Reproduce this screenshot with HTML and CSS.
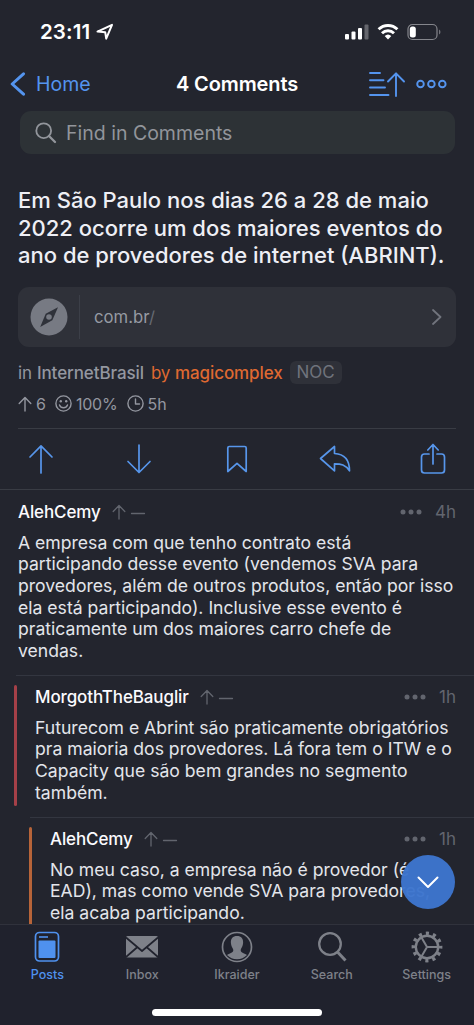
FILE: index.html
```html
<!DOCTYPE html>
<html lang="pt-BR">
<head>
<meta charset="utf-8">
<meta name="viewport" content="width=device-width, initial-scale=1">
<title>4 Comments</title>
<link rel="stylesheet" href="styles.css">
</head>
<body>
<svg class="defs" width="0" height="0">
  <symbol id="vote" viewBox="0 0 34 16"><path d="M7 15V2M1.200 7.500 7 1.500l5.800 6M19.500 9.500h13" /></symbol>
  <symbol id="dots" viewBox="0 0 22 6"><g fill="currentColor" stroke="none"><circle cx="3" cy="3" r="2.500"/><circle cx="11" cy="3" r="2.500"/><circle cx="19" cy="3" r="2.500"/></g></symbol>
</svg>
<div class="phone">
  <header class="status">
    <span class="time">23:11</span>
    <svg class="loc" width="18" height="18" viewBox="0 0 18 18"><path d="M1.500 8.600 16 1.800 10.200 15.600 9.200 9.200Z"/></svg>
    <svg class="signals" width="98" height="18" viewBox="0 0 98 18">
      <g fill="#fff"><rect x="1" y="11" width="4" height="5.500" rx="1"/><rect x="7.500" y="8.500" width="4" height="8" rx="1"/><rect x="14" y="5" width="4" height="11.500" rx="1"/><rect x="20.500" y="1.500" width="4" height="15" rx="1" opacity=".3"/></g>
      <g fill="none" stroke="#fff" stroke-width="2.900" stroke-linecap="butt"><path d="M34.600 6.300a13.400 13.400 0 0 1 18.800 0"/><path d="M38 10.200a8.600 8.600 0 0 1 12 0"/></g>
      <path fill="#fff" d="M40.700 13a4.800 4.800 0 0 1 6.600 0L44 16.500Z"/>
      <rect x="64" y="1.500" width="29" height="15" rx="4.500" fill="none" stroke="#85868c" stroke-width="1.200"/>
      <rect x="65.800" y="3.500" width="6" height="11" rx="2.500" fill="#fff"/>
      <path d="M95.200 6.500a3.200 3.200 0 0 1 0 5Z" fill="#85868c"/>
    </svg>
  </header>
  <nav class="nav">
    <a class="back"><svg width="16" height="24" viewBox="0 0 16 24"><path d="M13.500 1.800 2.200 12l11.300 10.200"/></svg><span>Home</span></a>
    <h1 class="nav-title">4 Comments</h1>
    <div class="nav-actions">
      <svg width="36" height="26" viewBox="0 0 36 26"><path d="M1 2h10M1 9.200h13.500M1 16.500h15M1 24h18.500M27 25V2.500M19 10.500l8-8.200 8 8.200"/></svg>
      <svg width="31" height="10" viewBox="0 0 31 10"><circle cx="4.500" cy="5" r="3.300"/><circle cx="15.400" cy="5" r="3.300"/><circle cx="26.300" cy="5" r="3.300"/></svg>
    </div>
  </nav>
  <div class="search">
    <svg width="22" height="22" viewBox="0 0 22 22"><circle cx="8.700" cy="8.700" r="7.400"/><path d="m14 14 6 6" stroke-width="2.300"/></svg>
    <span>Find in Comments</span>
  </div>
  <section class="post">
    <h2 class="title">Em São Paulo nos dias 26 a 28 de maio<br>2022 ocorre um dos maiores eventos do<br>ano de provedores de internet (ABRINT).</h2>
    <div class="link">
      <svg class="compass" width="38" height="38" viewBox="0 0 38 38"><circle cx="19" cy="19" r="18.500" fill="#777a83"/><path d="M28 9.200 22.300 22.300 10.200 29 15.700 15.700Z" fill="#2f323a"/><circle cx="19" cy="19" r="2.800" fill="#777a83"/></svg>
      <span class="host">com.br<i>/</i></span>
      <svg class="chev" width="10" height="16" viewBox="0 0 10 16"><path d="m1 1 7.500 7L1 15"/></svg>
    </div>
    <p class="meta"><span>in <b>InternetBrasil</b></span><span class="by">by <b>magicomplex</b></span><span class="flair">NOC</span></p>
    <p class="stats">
      <svg width="14" height="16" viewBox="0 0 14 16"><path d="M7 15V2M1.200 7.500 7 1.500l5.800 6"/></svg><span class="s1">6</span>
      <svg width="17" height="17" viewBox="0 0 17 17"><circle cx="8.500" cy="8.500" r="7.600"/><path d="M4.500 10a4.300 4.300 0 0 0 8 0"/><g fill="currentColor" stroke="none"><circle cx="5.800" cy="6.300" r="1.200"/><circle cx="11.200" cy="6.300" r="1.200"/></g></svg><span class="s2">100%</span>
      <svg width="17" height="17" viewBox="0 0 17 17"><circle cx="8.500" cy="8.500" r="7.600"/><path d="M8.500 4v5h4"/></svg><span>5h</span>
    </p>
    <div class="actions">
      <svg width="32" height="30" viewBox="0 0 24 30"><path d="M12 29V2M1 13 12 1.800 23 13"/></svg>
      <svg width="32" height="30" viewBox="0 0 24 30"><path d="M12 1v27M1 17.500l11 11 11-11"/></svg>
      <svg width="32" height="28" viewBox="0 0 22 28"><path d="M1.800 3q0-1.500 1.500-1.500h15.400q1.500 0 1.500 1.500v23.500L11 18.300 1.800 26.500Z"/></svg>
      <svg width="32" height="28" viewBox="0 0 32 28"><path d="M1.500 13.500 15.500 1.500V8.500C25.500 9 30.500 15.500 30.500 25.800 26.500 19.500 22 18.800 15.500 18.800V25.800Z"/></svg>
      <svg width="32" height="32" viewBox="0 0 26 32"><path d="M9 11H4.500Q1.500 11 1.500 14v13q0 3 3 3h17q3 0 3-3V14q0-3-3-3H17M13 21V2M7.800 7 13 1.500 18.200 7"/></svg>
    </div>
  </section>
  <main class="thread">
    <article class="comment c1">
      <div class="head"><b>AlehCemy</b><svg class="vote"><use href="#vote"/></svg><svg class="dots"><use href="#dots"/></svg><time>4h</time></div>
      <p>A empresa com que tenho contrato está<br>participando desse evento (vendemos SVA para<br>provedores, além de outros produtos, então por isso<br>ela está participando). Inclusive esse evento é<br>praticamente um dos maiores carro chefe de<br>vendas.</p>
    </article>
    <article class="comment c2">
      <div class="head"><b>MorgothTheBauglir</b><svg class="vote"><use href="#vote"/></svg><svg class="dots"><use href="#dots"/></svg><time>1h</time></div>
      <p>Futurecom e Abrint são praticamente obrigatórios<br>pra maioria dos provedores. Lá fora tem o ITW e o<br>Capacity que são bem grandes no segmento<br>também.</p>
    </article>
    <article class="comment c3">
      <div class="head"><b>AlehCemy</b><svg class="vote"><use href="#vote"/></svg><svg class="dots"><use href="#dots"/></svg><time>1h</time></div>
      <p>No meu caso, a empresa não é provedor (é<br>EAD), mas como vende SVA para provedores,<br>ela acaba participando.</p>
    </article>
  </main>
  <button class="jump" aria-label="Next comment"><svg width="22" height="13" viewBox="0 0 22 13"><path d="m1.500 1.500 9.500 9.500 9.500-9.500"/></svg></button>
  <footer class="tabs">
    <div class="tab on"><svg width="26" height="32" viewBox="0 0 26 32"><rect x="1.500" y="1.500" width="23" height="28.500" rx="4" fill="none" stroke="currentColor" stroke-width="1.700"/><rect x="4.500" y="9.500" width="17" height="17.500" rx="1" fill="currentColor"/><path d="M5 6h9" stroke="currentColor" stroke-width="1.600"/></svg><span>Posts</span></div>
    <div class="tab"><svg width="34" height="32" viewBox="0 0 34 32"><rect x="1" y="5" width="32" height="21.500" rx="1.500" fill="currentColor"/><path d="M1 6.500 17 20 33 6.500M1 26l11.500-10M33 26 21.500 16" fill="none" stroke="#20222d" stroke-width="1.700"/></svg><span>Inbox</span></div>
    <div class="tab"><svg width="32" height="32" viewBox="0 0 32 32"><circle cx="16" cy="16" r="14.500" fill="none" stroke="currentColor" stroke-width="1.700"/><path fill="currentColor" d="M16 5c4.500 0 6.300 3 6.100 7-.2 3.200-1.500 4.500-2.300 6.500-.7 3 2.500 3.300 6.200 5.500A14 14 0 0 1 6 24c3.700-2.200 6.900-2.500 6.200-5.500-.8-2-2.100-3.300-2.300-6.500C9.700 8 11.500 5 16 5Z"/></svg><span>Ikraider</span></div>
    <div class="tab"><svg width="32" height="32" viewBox="0 0 32 32"><g fill="none" stroke="currentColor"><circle cx="14" cy="13" r="10.800" stroke-width="2.300"/><path d="m21.500 21 8 8.500" stroke-width="3"/></g></svg><span>Search</span></div>
    <div class="tab"><svg width="32" height="32" viewBox="0 0 32 32"><g fill="none" stroke="currentColor" stroke-width="2.400"><circle cx="16" cy="16" r="11.200"/><circle cx="16" cy="16" r="13.700" stroke-width="3.400" stroke-dasharray="3.200 3.973" stroke-dashoffset="1.600"/><path d="M16 16h11M16 16l-5.500-9.500M16 16l-5.500 9.500" stroke-width="2"/></g></svg><span>Settings</span></div>
    <div class="home-bar"></div>
  </footer>
</div>
</body>
</html>
```
FILE: styles.css
```css
* { box-sizing: border-box; margin: 0; padding: 0; }
body { background: #23252e; }
.defs { display: block; position: absolute; }
svg { flex: none; fill: none; stroke: currentColor; stroke-linecap: round; stroke-linejoin: round; }
.phone {
  position: relative; width: 474px; height: 1025px; overflow: hidden;
  display: flex; flex-direction: column;
  background: #23252e; color: #e6e7ed;
  font-family: Inter, "Liberation Sans", sans-serif;
}
.status { height: 60px; padding: 3px 32px 0 40px; display: flex; align-items: center; color: #fff; }
.time { font-size: 20.500px; font-weight: 600; letter-spacing: .1px; width: 56px; }
.loc { stroke-width: 2; }
.signals { margin-left: auto; stroke: none; }
.nav { height: 51px; padding: 0 10px 3px; display: grid; grid-template-columns: 1fr auto 1fr; align-items: center; color: #5494ee; }
.back { display: flex; align-items: center; gap: 10px; font-size: 19.500px; }
.back svg { stroke-width: 3; }
.nav-title { color: #fff; font-size: 20px; font-weight: 600; letter-spacing: -.1px; }
.nav-actions { display: flex; justify-content: flex-end; align-items: center; gap: 11px; padding-right: 17px; stroke-width: 1.9; }
.search { height: 43px; margin: 0 19px 0 20px; padding-left: 15px; border-radius: 11px; background: #2d3236; color: #92959b; display: flex; align-items: center; gap: 9px; font-size: 19.500px; }
.search svg { stroke-width: 1.8; }
.post { padding: 33px 18px 0; }
.title { font-size: 22px; line-height: 27.500px; font-weight: 500; white-space: nowrap; color: #eeeff5; }
.link { margin-top: 17px; height: 60px; border-radius: 11px; background: #2f3139; display: flex; align-items: center; padding: 0 14px 0 12px; color: #969aa3; }
.compass { stroke: none; }
.host { flex: 1; margin-left: 11px; padding-left: 14px; height: 44px; line-height: 44px; border-left: 1px solid #3c3f48; font-size: 16.700px; }
.host i { color: #666a73; font-style: normal; }
.chev { color: #71747d; stroke-width: 1.8; }
.meta { margin-top: 14px; height: 24px; display: flex; align-items: center; gap: 7px; font-size: 17px; color: #9497a0; white-space: nowrap; }
b { font-weight: 500; }
.meta b { letter-spacing: -.1px; }
.by { color: #df6931; letter-spacing: -.1px; }
.flair { height: 23px; line-height: 23px; padding: 0 7px; border-radius: 6px; background: #2f3139; color: #70737c; }
.stats { margin-top: 10px; height: 18px; display: flex; align-items: center; gap: 4px; color: #9497a0; font-size: 16px; }
.stats svg { stroke-width: 1.4; }
.s1, .s2 { margin-right: 5px; }
.s2 { letter-spacing: -.2px; }
.actions { margin-top: 15px; height: 61px; padding: 0 7px; border-top: 1px solid #393c44; display: flex; justify-content: space-between; align-items: center; color: #5796eb; stroke-width: 1.700; }
.thread { border-top: 1px solid #393c44; }
.comment { position: relative; padding-right: 18px; }
.comment + .comment::before { content: ""; position: absolute; top: 0; right: 0; height: 1px; background: #333640; }
.comment::after { position: absolute; width: 3px; border-radius: 2px; }
.c1 { padding-left: 18px; height: 185px; padding-top: 11px; }
.c2 { padding-left: 35px; height: 142px; padding-top: 11px; }
.c3 { padding-left: 50px; padding-top: 11px; }
.c2::before { left: 16px; }
.c3::before { left: 30px; }
.c2::after { content: ""; left: 14px; top: 10px; height: 121px; background: #a54048; }
.c3::after { content: ""; left: 29px; top: 10px; height: 110px; background: #b76439; }
.head { height: 22px; display: flex; align-items: center; color: #62656e; font-size: 17px; }
.head b { color: #fbfbff; margin-right: 11px; letter-spacing: -.12px; }
.vote { width: 34px; height: 16px; stroke-width: 1.300; }
.dots { width: 22px; height: 6px; margin: 0 13px 0 auto; }
.comment p { margin-top: 9px; font-size: 17.600px; line-height: 21.700px; white-space: nowrap; color: #e3e5eb; }
.jump { position: absolute; left: 401px; top: 855px; width: 54px; height: 54px; border: 0; border-radius: 50%; background: rgba(61, 117, 205, .97); color: #fff; display: grid; place-items: center; stroke-width: 2; }
.tabs { position: absolute; left: 0; right: 0; top: 924px; height: 101px; padding-top: 6px; background: #20222d; border-top: 1px solid #30323c; display: grid; grid-template-columns: repeat(5, 94.800px); grid-template-rows: 56px 1fr; }
.tab { display: flex; flex-direction: column; align-items: center; gap: 4px; color: #7e8189; font-size: 12.500px; font-weight: 500; }
.tab svg { stroke: none; stroke-linecap: butt; }
.on { color: #4f91ee; }
.home-bar { grid-column: 1 / -1; justify-self: center; margin: 22px 0 0 0; width: 170px; height: 7px; border-radius: 4px; background: #fff; }
```
